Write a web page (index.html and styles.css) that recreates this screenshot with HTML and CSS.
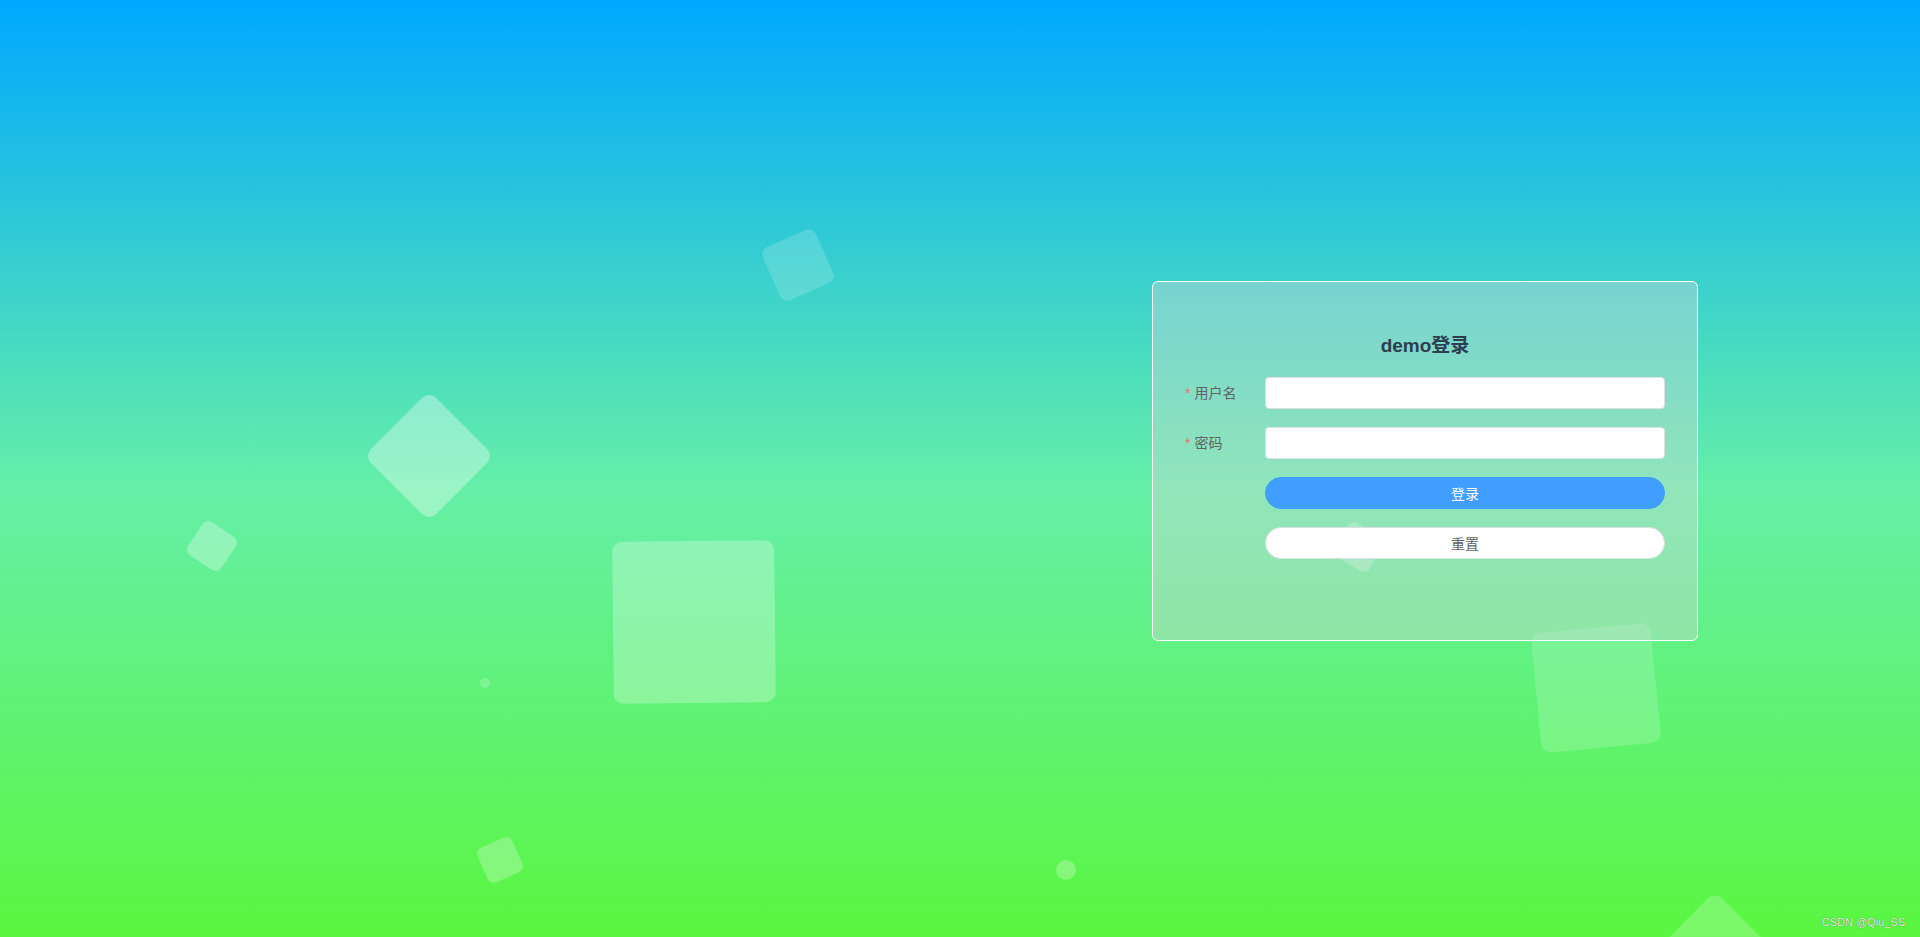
FILE: index.html
```html
<!DOCTYPE html>
<html lang="zh-CN">
<head>
<meta charset="utf-8">
<title>demo登录</title>
<link rel="stylesheet" href="styles.css">
</head>
<body>
<div class="scene">
  <ul class="shapes">
    <li class="shape s1"></li>
    <li class="shape s2"></li>
    <li class="shape s3"></li>
    <li class="shape s4"></li>
    <li class="shape dot s5"></li>
    <li class="shape s6"></li>
    <li class="shape dot s7"></li>
    <li class="shape s8"></li>
    <li class="shape s9"></li>
    <li class="shape s10"></li>
  </ul>

  <div class="login-card">
    <h3 class="login-title">demo登录</h3>
    <form class="login-form">
      <div class="form-item">
        <label class="form-label"><span class="req">*</span>用户名</label>
        <input class="form-input" type="text">
      </div>
      <div class="form-item">
        <label class="form-label"><span class="req">*</span>密码</label>
        <input class="form-input" type="password">
      </div>
      <div class="form-item">
        <span class="form-label"></span>
        <button type="button" class="btn btn-primary">登录</button>
      </div>
      <div class="form-item">
        <span class="form-label"></span>
        <button type="button" class="btn btn-default">重置</button>
      </div>
    </form>
  </div>

  <div class="watermark">CSDN @Qiu_SS</div>
</div>
</body>
</html>
```

FILE: styles.css
```css
* { box-sizing: border-box; }

html, body {
  margin: 0;
  padding: 0;
  width: 100%;
  height: 100%;
  overflow: hidden;
}

body {
  font-family: "Liberation Sans", "Noto Sans CJK SC", Arial, sans-serif;
}

.scene {
  position: relative;
  width: 100%;
  height: 937px;
  overflow: hidden;
  background: linear-gradient(to bottom, #00a8ff 0%, #65efa8 52%, #5af640 100%);
  display: flex;
  justify-content: flex-end;
  align-items: flex-start;
  padding: 281px 222px 0 0;
}

/* floating decorative shapes */
.shapes {
  list-style: none;
  margin: 0;
  padding: 0;
}

.shape {
  position: absolute;
  display: block;
  background: rgba(255, 255, 255, 0.25);
  border-radius: 8px;
}

.dot { border-radius: 50%; }

.s1 { left: 769px; top: 236px; width: 58px; height: 58px; transform: rotate(-24deg); background: rgba(255,255,255,0.17); }
.s2 { left: 383px; top: 410px; width: 92px; height: 92px; transform: rotate(45deg); border-radius: 10px; background: rgba(255,255,255,0.35); }
.s3 { left: 192px; top: 526px; width: 40px; height: 40px; transform: rotate(34deg); border-radius: 7px; background: rgba(255,255,255,0.3); }
.s4 { left: 613px; top: 541px; width: 162px; height: 162px; transform: rotate(-0.7deg); border-radius: 10px; background: rgba(255,255,255,0.28); }
.s5 { left: 480px; top: 678px; width: 10px; height: 10px; background: rgba(255,255,255,0.2); }
.s6 { left: 481px; top: 841px; width: 38px; height: 38px; transform: rotate(-24deg); border-radius: 7px; background: rgba(255,255,255,0.25); }
.s7 { left: 1056px; top: 860px; width: 20px; height: 20px; background: rgba(255,255,255,0.25); }
.s8 { left: 1665px; top: 912px; width: 100px; height: 100px; transform: rotate(45deg); border-radius: 10px; background: rgba(255,255,255,0.2); }
.s9 { left: 1536px; top: 628px; width: 120px; height: 120px; transform: rotate(-5.5deg); border-radius: 10px; background: rgba(255,255,255,0.17); }
.s10 { left: 1339px; top: 527px; width: 40px; height: 40px; transform: rotate(30deg); border-radius: 7px; background: rgba(255,255,255,0.3); }

/* login card */
.login-card {
  position: relative;
  z-index: 1;
  width: 546px;
  height: 360px;
  padding: 50px 32px 63px;
  border: 1px solid #ffffff;
  border-radius: 6px;
  background: rgba(210, 215, 215, 0.4);
}

.login-title {
  margin: 0 0 17px;
  height: 28px;
  line-height: 28px;
  text-align: center;
  font-size: 19px;
  font-weight: bold;
  color: #2c3e50;
}

.login-form {
  margin: 0;
}

.form-item {
  display: flex;
  align-items: center;
  height: 32px;
  margin-bottom: 18px;
}

.form-label {
  flex: 0 0 80px;
  font-size: 14px;
  color: #606266;
  line-height: 32px;
}

.req {
  color: #f56c6c;
  margin-right: 4px;
}

.form-input {
  flex: 1;
  height: 32px;
  margin: 0;
  padding: 0 15px;
  border: 1px solid #dcdfe6;
  border-radius: 4px;
  background: #ffffff;
  font-family: inherit;
  font-size: 13px;
  color: #606266;
  outline: none;
}

.btn {
  flex: 1;
  height: 32px;
  margin: 0;
  padding: 0 0 1px;
  border-radius: 20px;
  font-family: inherit;
  font-size: 14px;
  cursor: pointer;
}

.btn-primary {
  background: #409eff;
  border: 1px solid #409eff;
  color: #ffffff;
}

.btn-default {
  background: #ffffff;
  border: 1px solid #dcdfe6;
  color: #606266;
}

.watermark {
  position: absolute;
  right: 15px;
  bottom: 9px;
  font-size: 11px;
  color: #e8e8e8;
  text-shadow: 0 0 1px rgba(0, 0, 0, 0.5);
}
```
